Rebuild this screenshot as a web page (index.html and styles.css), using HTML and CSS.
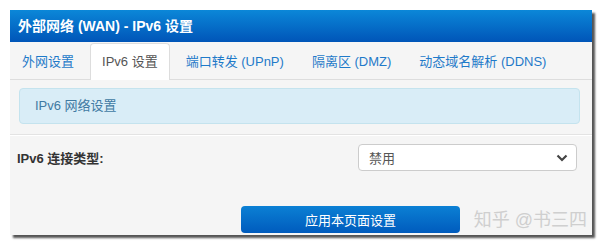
FILE: index.html
```html
<!DOCTYPE html>
<html lang="zh-CN">
<head>
    <meta charset="UTF-8">
    <title>外部网络 (WAN) - IPv6 设置</title>
    <link rel="stylesheet" href="styles.css">
</head>
<body>
    <div class="panel">
        <div class="panel-title">外部网络 (WAN) - IPv6 设置</div>
        <ul class="tabs">
            <li>外网设置</li>
            <li class="active">IPv6 设置</li>
            <li>端口转发 (UPnP)</li>
            <li>隔离区 (DMZ)</li>
            <li>动态域名解析 (DDNS)</li>
        </ul>
        <div class="content">
            <div class="info">IPv6 网络设置</div>
            <hr class="sep">
            <div class="form-row">
                <label for="type">IPv6 连接类型:</label>
                <div class="select">
                    <span>禁用</span>
                    <svg width="12" height="8" viewBox="0 0 12 8"><path d="M1.5 1.5 L6 6 L10.5 1.5" fill="none" stroke="#444" stroke-width="2.2"/></svg>
                </div>
            </div>
            <div class="actions">
                <button class="btn">应用本页面设置</button>
            </div>
        </div>
        <div class="watermark">知乎 @书三四</div>
    </div>
</body>
</html>
```
FILE: styles.css
```css
body {
    margin: 0;
    padding: 10px;
    background: #fff;
    font-family: "Liberation Sans", "Noto Sans CJK SC", sans-serif;
    font-size: 13px;
}
.panel {
    position: relative;
    width: 582px;
    height: 225px;
    background: #f5f5f5;
    box-shadow: 3px 3px 2px #555;
}
.panel-title {
    height: 32px;
    line-height: 32px;
    padding-left: 8px;
    color: #fff;
    font-size: 14px;
    font-weight: bold;
    background: linear-gradient(#0b87d8, #0055b8);
}
.tabs {
    display: flex;
    margin: 0;
    padding: 1px 0 0 0;
    list-style: none;
    height: 36px;
    border-bottom: 1px solid #ddd;
}
.tabs li {
    padding: 0 11px;
    margin-right: 4px;
    line-height: 35px;
    color: #1f7ac9;
    border: 1px solid transparent;
    border-bottom: none;
    border-radius: 4px 4px 0 0;
}
.tabs li.active {
    background: #fff;
    color: #555;
    border-color: #ddd;
    height: 36px;
    margin-bottom: -1px;
}
.content {
    padding: 8px 12px 0 9px;
}
.info {
    height: 34px;
    line-height: 34px;
    padding-left: 15px;
    background: #d9edf7;
    border: 1px solid #c4e3ee;
    border-radius: 4px;
    color: #3f7aa3;
}
.sep {
    margin: 10px -12px 0 -9px;
    border: none;
    border-top: 1px solid #e3e3e3;
    border-bottom: 1px solid #fff;
}
.form-row {
    display: flex;
    justify-content: space-between;
    align-items: center;
    margin: 8px 0 0 -2px;
    padding-right: 3px;
}
.form-row label {
    font-weight: bold;
    color: #333;
}
.select {
    display: flex;
    justify-content: space-between;
    align-items: center;
    width: 199px;
    height: 25px;
    padding: 0 8px 0 10px;
    background: #fff;
    border: 1px solid #ccc;
    border-radius: 4px;
    color: #555;
}
.actions {
    margin-top: 35px;
    padding-left: 222px;
}
.btn {
    display: block;
    width: 219px;
    height: 27px;
    border: none;
    border-radius: 4px;
    background: linear-gradient(#0b80d4, #005bbd);
    color: #fff;
    font-family: inherit;
    font-size: 13px;
}
.watermark {
    position: absolute;
    right: 5px;
    bottom: 4px;
    font-size: 18px;
    color: #cfcfcf;
}
```
